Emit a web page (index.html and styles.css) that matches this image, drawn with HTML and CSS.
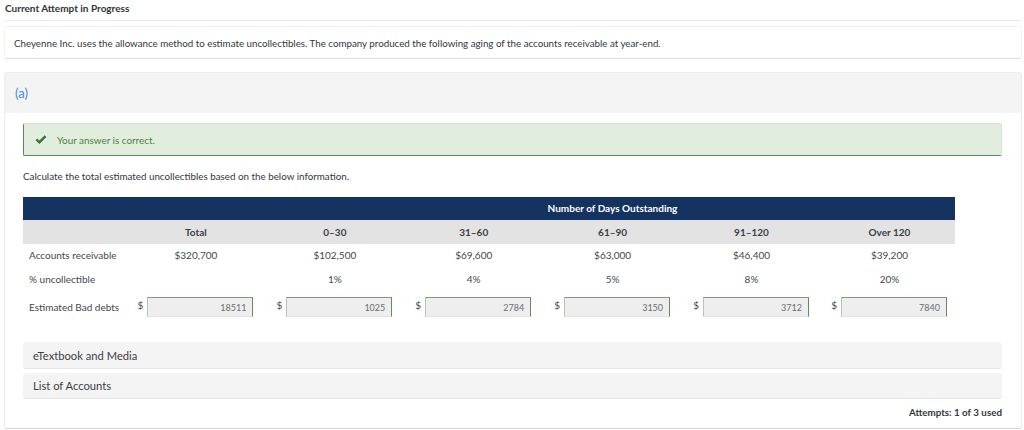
FILE: index.html
```html
<!DOCTYPE html>
<html lang="en">
<head>
<meta charset="utf-8">
<title>Current Attempt in Progress</title>
<link rel="stylesheet" href="styles.css">
</head>
<body>
<div class="page">
  <h1 class="title">Current Attempt in Progress</h1>
  <div class="intro">Cheyenne Inc. uses the allowance method to estimate uncollectibles. The company produced the following aging of the accounts receivable at year-end.</div>
  <section class="part">
    <div class="part-head">(a)</div>
    <div class="part-body">
      <div class="alert">
        <svg class="check" viewBox="0 0 12 10" aria-hidden="true"><path d="M0.6 5.2 L2.3 3.5 L4.4 5.5 L9.7 0.3 L11.4 2 L4.4 9 Z"/></svg>
        <span>Your answer is correct.</span>
      </div>
      <p class="prompt">Calculate the total estimated uncollectibles based on the below information.</p>
      <div class="aging">
        <div class="band"><div class="band-title">Number of Days Outstanding</div></div>
        <div class="heads">
          <div></div><div>Total</div><div>0–30</div><div>31–60</div><div>61–90</div><div>91–120</div><div class="last">Over 120</div>
        </div>
        <div class="row">
          <div class="label">Accounts receivable</div><div>$320,700</div><div>$102,500</div><div>$69,600</div><div>$63,000</div><div>$46,400</div><div class="last">$39,200</div>
        </div>
        <div class="row">
          <div class="label">% uncollectible</div><div></div><div>1%</div><div>4%</div><div>5%</div><div>8%</div><div class="last">20%</div>
        </div>
        <div class="row inputs">
          <div class="label">Estimated Bad debts</div>
          <div class="money"><span>$</span><div class="field">18511</div></div>
          <div class="money"><span>$</span><div class="field">1025</div></div>
          <div class="money"><span>$</span><div class="field">2784</div></div>
          <div class="money"><span>$</span><div class="field">3150</div></div>
          <div class="money"><span>$</span><div class="field">3712</div></div>
          <div class="money"><span>$</span><div class="field">7840</div></div>
        </div>
      </div>
      <div class="link-bar first">eTextbook and Media</div>
      <div class="link-bar">List of Accounts</div>
      <div class="attempts">Attempts: 1 of 3 used</div>
    </div>
  </section>
</div>
</body>
</html>
```
FILE: styles.css
```css
* { box-sizing: border-box; }
html, body { margin: 0; padding: 0; background: #fff; }
body { width: 1024px; height: 430px; overflow: hidden; font-family: Lato, "Open Sans", sans-serif; color: #3c4043; }
.page { padding: 0 2px 0 4px; }
.title { margin: 0; height: 21px; padding: 2px 0 0 1px; font-size: 10px; line-height: 13px; font-weight: 700; color: #2f3437; border-bottom: 1px solid #ececec; }
.intro { margin-top: 5px; height: 33px; padding: 0 9px; font-size: 9.75px; line-height: 33px; color: #33373a; background: #fff; border: 1px solid #f2f2f2; border-bottom: 1px solid #dcdcdc; border-radius: 3px; }
.part { margin-top: 13px; height: 357px; border: 1px solid #ececec; border-bottom: 1px solid #d6d6d6; border-radius: 3px; }
.part-head { height: 40px; padding-left: 10px; background: #f4f4f4; font-size: 13px; line-height: 40px; color: #3d8ce4; }
.part-body { padding: 10px 19px 0 18px; }
.alert { display: flex; align-items: center; height: 33px; width: 979px; padding-left: 11px; background: #e2eedd; border: 1px solid #d5e2cf; border-left: 1px solid #5f8659; border-bottom: 1px solid #5f8659; border-radius: 2px; font-size: 9.9px; color: #4e7d48; }
.check { width: 12px; height: 10px; margin-right: 10px; fill: #3f7139; }
.prompt { margin: 14px 0 0; height: 27px; font-size: 9.8px; line-height: 13px; color: #33373a; }
.aging { width: 932px; font-size: 10px; }
.band { height: 23px; background: #143360; display: grid; grid-template-columns: 243px 1fr; }
.band-title { grid-column: 2; padding-left: 4px; text-align: center; font-weight: 700; font-size: 10px; line-height: 23px; color: #fff; }
.heads, .row { display: grid; grid-template-columns: 103.5px repeat(5, 138.9px) 1fr; text-align: center; }
.heads { height: 24px; background: #e3e3e3; font-weight: 700; line-height: 24px; color: #3c4043; }
.row { height: 24px; line-height: 23px; color: #44484b; }
.last { padding-left: 3px; }
.label { padding-left: 6px; text-align: left; white-space: nowrap; }
.inputs { height: 33px; line-height: 33px; }
.inputs .label { line-height: 31px; }
.money { display: flex; justify-content: flex-end; align-items: flex-start; gap: 4px; padding: 5px 12px 0 0; height: 33px; line-height: 17px; }
.money:last-child { padding-right: 8px; }
.field { width: 106px; height: 20px; padding-right: 6px; line-height: 20px; text-align: right; font-size: 9px; color: #6a6d70; background: #eeeeee; border-top: 1px solid #7c9e76; border-right: 1px solid #5f8f58; border-left: 1px solid #b4c8b0; border-bottom: 1px solid #e3e3e3; }
.link-bar { height: 26px; margin-top: 4px; width: 979px; padding-left: 10px; background: #f4f4f4; border-bottom: 1px solid #e6e6e6; border-radius: 3px; font-size: 11.2px; line-height: 26px; color: #3c4043; }
.link-bar.first { height: 27px; margin-top: 17px; line-height: 27px; }
.attempts { width: 979px; margin-top: 7px; font-size: 9.8px; line-height: 13px; font-weight: 700; text-align: right; color: #33373a; }
```
